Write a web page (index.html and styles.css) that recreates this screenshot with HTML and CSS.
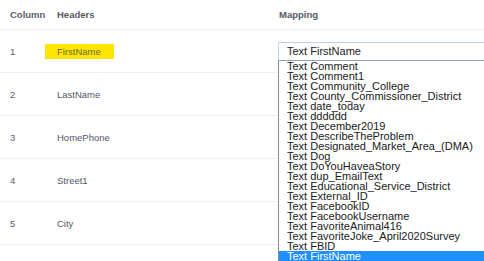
FILE: index.html
```html
<!DOCTYPE html>
<html lang="en">
<head>
  <meta charset="UTF-8">
  <title>Field Mapping</title>
  <link rel="stylesheet" href="styles.css">
</head>
<body>
  <div class="mapping-table">
    <div class="row head">
      <div class="cell num">Column</div>
      <div class="cell name">Headers</div>
      <div class="cell map">Mapping</div>
    </div>
    <div class="row">
      <div class="cell num">1</div>
      <div class="cell name"><span class="marked">FirstName</span></div>
      <div class="cell map">
        <div class="picker">
          <div class="picker-value">Text FirstName</div>
          <ul class="picker-list">
            <li>Text Comment</li>
            <li>Text Comment1</li>
            <li>Text Community_College</li>
            <li>Text County_Commissioner_District</li>
            <li>Text date_today</li>
            <li>Text dddddd</li>
            <li>Text December2019</li>
            <li>Text DescribeTheProblem</li>
            <li>Text Designated_Market_Area_(DMA)</li>
            <li>Text Dog</li>
            <li>Text DoYouHaveaStory</li>
            <li>Text dup_EmailText</li>
            <li>Text Educational_Service_District</li>
            <li>Text External_ID</li>
            <li>Text FacebookID</li>
            <li>Text FacebookUsername</li>
            <li>Text FavoriteAnimal416</li>
            <li>Text FavoriteJoke_April2020Survey</li>
            <li>Text FBID</li>
            <li class="selected">Text FirstName</li>
          </ul>
        </div>
      </div>
    </div>
    <div class="row">
      <div class="cell num">2</div>
      <div class="cell name">LastName</div>
      <div class="cell map"></div>
    </div>
    <div class="row">
      <div class="cell num">3</div>
      <div class="cell name">HomePhone</div>
      <div class="cell map"></div>
    </div>
    <div class="row">
      <div class="cell num">4</div>
      <div class="cell name">Street1</div>
      <div class="cell map"></div>
    </div>
    <div class="row">
      <div class="cell num">5</div>
      <div class="cell name">City</div>
      <div class="cell map"></div>
    </div>
  </div>
</body>
</html>
```

FILE: styles.css
```css
html, body {
  height: 261px;
}
body {
  margin: 0;
  background: #fff;
  font-family: "Liberation Sans", Arial, sans-serif;
  overflow: hidden;
}
.mapping-table {
  width: 484px;
  height: 261px;
}
.row {
  display: grid;
  grid-template-columns: 47px 222px 1fr;
  align-items: center;
  height: 43px;
  padding-left: 10px;
  border-bottom: 1px solid #f0f0f0;
  box-sizing: border-box;
  color: #4f5866;
  font-size: 9.5px;
}
.row.head {
  height: 30px;
  font-weight: bold;
  color: #555a63;
}
.cell.num {
  color: #5a6270;
}
.marked {
  display: inline-block;
  background: #ffe500;
  margin-left: -12px;
  padding: 2px 13px 2px 12px;
  line-height: 11px;
  color: #6b6b2a;
}
.cell.map {
  position: relative;
}
.picker {
  position: absolute;
  left: -1px;
  top: -9px;
  width: 240px;
  z-index: 2;
}
.picker-value {
  height: 17px;
  line-height: 17px;
  border: 1px solid #b9d3ee;
  border-bottom-color: #8aa0b8;
  padding-left: 8px;
  font-size: 11px;
  color: #222;
  background: #fff;
}
.picker-list {
  list-style: none;
  margin: 0;
  padding: 0;
  border-left: 1px solid #8a8a8a;
  background: #fff;
  font-size: 11px;
  line-height: 10px;
  color: #1a1a1a;
}
.picker-list li {
  padding-left: 8px;
  white-space: nowrap;
}
.picker-list li.selected {
  background: #1e8fff;
  color: #fff;
}
```
